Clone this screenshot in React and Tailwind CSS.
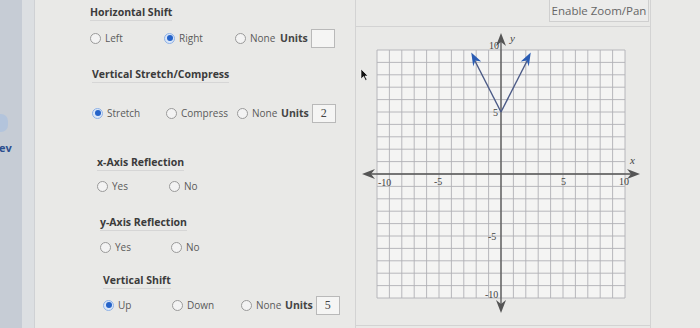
import React from 'react';

const font = { fontFamily: '"Open Sans", "Liberation Sans", sans-serif' };

const Radio = ({ label, checked }) => (
    <div className="flex items-center gap-[4px] leading-none">
        {checked ? (
            <span className="w-[11px] h-[11px] rounded-full border border-[#8fb2e6] bg-[#dbe7f8] flex items-center justify-center">
                <span className="w-[6px] h-[6px] rounded-full bg-[#2563c9]" />
            </span>
        ) : (
            <span className="w-[11px] h-[11px] rounded-full border border-[#9a9a9a] bg-[#f3f3f3]" />
        )}
        <span className="text-[10px] text-[#5a5a5a]">{label}</span>
    </div>
);

const Header = ({ children }) => (
    <div className="text-[10.5px] font-bold text-[#3b3b3b] border-b border-[#d6d6d6] leading-[15px]">
        {children}
    </div>
);

const Units = ({ value }) => (
    <div className="flex items-center gap-[3px] leading-none">
        <span className="text-[10.5px] font-bold text-[#444]">Units</span>
        <div
            className="w-[24px] h-[19px] border border-[#b9b9b9] bg-[#f5f5f4] flex items-center justify-center text-[12px] text-[#444]"
            style={{ fontFamily: '"Liberation Serif", serif' }}
        >
            {value}
        </div>
    </div>
);

// graph: 20x20 cells, origin in the middle
const Graph = () => {
    const left = 21;
    const top = 23;
    const cell = 12.4;
    const size = cell * 20;
    const cx = left + cell * 10;
    const cy = top + cell * 10;
    const lines = [];
    for (let i = 0; i <= 20; i++) {
        lines.push(<line key={'v' + i} x1={left + i * cell} y1={top} x2={left + i * cell} y2={top + size} stroke="#b0b0b5" strokeWidth="0.9" />);
        lines.push(<line key={'h' + i} x1={left} y1={top + i * cell} x2={left + size} y2={top + i * cell} stroke="#b0b0b5" strokeWidth="0.9" />);
    }
    const vx = cx;
    const vy = cy - 5 * cell;
    const lx = cx - 2.4 * cell;
    const rx = cx + 2.4 * cell;
    const ty = cy - 9.8 * cell;
    const serif = { fontFamily: '"Liberation Serif", serif' };

    return (
        <svg width="295" height="298" viewBox="0 0 295 298">
            <rect x={left} y={top} width={size} height={size} fill="#f4f4f3" />
            {lines}
            {/* axes */}
            <line x1="12" y1={cy} x2="278" y2={cy} stroke="#555" strokeWidth="1.3" />
            <line x1={cx} y1="12" x2={cx} y2="280" stroke="#555" strokeWidth="1.3" />
            <polygon points={`6,${cy} 19,${cy - 5} 15,${cy} 19,${cy + 5}`} fill="#555" />
            <polygon points={`284,${cy} 271,${cy - 5} 275,${cy} 271,${cy + 5}`} fill="#555" />
            <polygon points={`${cx},6 ${cx - 5},19 ${cx},15 ${cx + 5},19`} fill="#555" />
            <polygon points={`${cx},286 ${cx - 5},273 ${cx},277 ${cx + 5},273`} fill="#555" />
            {/* labels */}
            <text x={cx - 12} y="22" fontSize="10" fill="#444" style={serif}>10</text>
            <text x={cx + 9} y="15" fontSize="11" fontStyle="italic" fill="#444" style={serif}>y</text>
            <text x={cx - 8} y={vy + 4} fontSize="10" fill="#444" style={serif}>5</text>
            <text x={cx - 13} y={cy + 5 * cell + 4} fontSize="10" fill="#444" style={serif}>-5</text>
            <text x={cx - 16} y={cy + 10 * cell} fontSize="10" fill="#444" style={serif}>-10</text>
            <text x={left + 1} y={cy + 12} fontSize="10" fill="#444" style={serif}>-10</text>
            <text x={cx - 5 * cell - 5} y={cy + 11} fontSize="10" fill="#444" style={serif}>-5</text>
            <text x={cx + 5 * cell - 2} y={cy + 11} fontSize="10" fill="#444" style={serif}>5</text>
            <text x={left + size - 6} y={cy + 11} fontSize="10" fill="#444" style={serif}>10</text>
            <text x="274" y={cy - 10} fontSize="11" fontStyle="italic" fill="#444" style={serif}>x</text>
            {/* y = 2|x| + 5 */}
            <line x1={vx} y1={vy} x2={lx + 3} y2={ty + 7} stroke="#4b5a86" strokeWidth="1.4" />
            <line x1={vx} y1={vy} x2={rx - 3} y2={ty + 7} stroke="#4b5a86" strokeWidth="1.4" />
            <polygon points={`${lx},${ty} ${lx + 10},${ty + 9} ${lx + 4},${ty + 8} ${lx + 2},${ty + 14}`} fill="#2a5cb3" />
            <polygon points={`${rx},${ty} ${rx - 10},${ty + 9} ${rx - 4},${ty + 8} ${rx - 2},${ty + 14}`} fill="#2a5cb3" />
        </svg>
    );
};

const App = () => {
    return (
        <div className="w-[700px] h-[328px] flex bg-[#e9e9e7] overflow-hidden relative leading-none" style={font}>
            {/* side strip */}
            <div className="w-[22px] bg-[#c6ccd5] relative">
                <div className="absolute left-[-6px] top-[114px] w-[14px] h-[18px] rounded-full bg-[#b3c4dc]" />
                <div className="absolute left-[-1px] top-[142px] text-[11px] font-bold text-[#2d4f8f]">ev</div>
            </div>
            <div className="w-[13px] bg-[#dcdfe2] border-r border-[#cfd1d4]" />

            {/* controls */}
            <div className="w-[320px] flex flex-col">
                <div className="pl-[55px] mt-[5px] flex flex-col items-start">
                    <Header>Horizontal Shift</Header>
                    <div className="mt-[7px] h-[20px] flex items-center">
                        <div className="w-[74px]"><Radio label="Left" /></div>
                        <div className="w-[71px]"><Radio label="Right" checked /></div>
                        <div className="w-[45px]"><Radio label="None" /></div>
                        <Units value="" />
                    </div>
                </div>

                <div className="pl-[57px] mt-[19px] flex flex-col items-start">
                    <Header>Vertical Stretch/Compress</Header>
                    <div className="mt-[20px] h-[20px] flex items-center">
                        <div className="w-[74px]"><Radio label="Stretch" checked /></div>
                        <div className="w-[71px]"><Radio label="Compress" /></div>
                        <div className="w-[44px]"><Radio label="None" /></div>
                        <Units value="2" />
                    </div>
                </div>

                <div className="pl-[62px] mt-[32px] flex flex-col items-start">
                    <Header>x-Axis Reflection</Header>
                    <div className="mt-[6px] h-[18px] flex items-center">
                        <div className="w-[72px]"><Radio label="Yes" /></div>
                        <Radio label="No" />
                    </div>
                </div>

                <div className="pl-[65px] mt-[20px] flex flex-col items-start">
                    <Header>y-Axis Reflection</Header>
                    <div className="mt-[7px] h-[18px] flex items-center">
                        <div className="w-[71px]"><Radio label="Yes" /></div>
                        <Radio label="No" />
                    </div>
                </div>

                <div className="pl-[68px] mt-[17px] flex flex-col items-start">
                    <Header>Vertical Shift</Header>
                    <div className="mt-[6px] h-[20px] flex items-center">
                        <div className="w-[69px]"><Radio label="Up" checked /></div>
                        <div className="w-[69px]"><Radio label="Down" /></div>
                        <div className="w-[44px]"><Radio label="None" /></div>
                        <Units value="5" />
                    </div>
                </div>
            </div>

            {/* graph panel */}
            <div className="w-[296px] flex flex-col border-l border-r border-[#d3d3d3]">
                <div className="h-[27px] flex justify-end items-start border-b border-[#d3d3d3] pr-[1px]">
                    <div className="w-[100px] h-[22px] border border-[#cfcfcf] border-t-0 bg-[#ececeb] flex items-center justify-center text-[11.5px] text-[#666] whitespace-nowrap">
                        Enable Zoom/Pan
                    </div>
                </div>
                <div className="flex-1">
                    <Graph />
                </div>
                <div className="h-[3px] border-t border-[#d3d3d3]" />
            </div>

            {/* mouse pointer */}
            <svg className="absolute left-[360px] top-[68px]" width="9" height="13" viewBox="0 0 9 13">
                <polygon points="1,1 1,11 3.5,8.5 5.5,12.5 7,11.8 5,8 8,8" fill="#111" stroke="#fff" strokeWidth="0.6" />
            </svg>
        </div>
    );
};

export default App;
